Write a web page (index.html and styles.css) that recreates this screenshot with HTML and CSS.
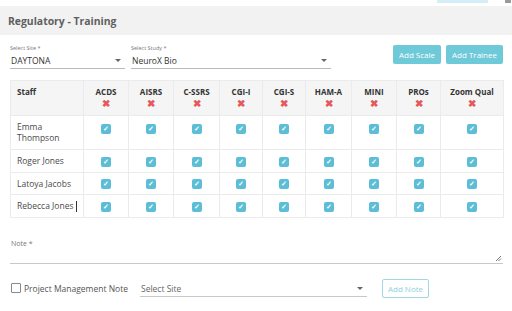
FILE: index.html
```html
<!DOCTYPE html>
<html lang="en">
<head>
    <meta charset="UTF-8">
    <title>Regulatory - Training</title>
    <link rel="stylesheet" href="styles.css">
</head>
<body>
    <div class="top-strip">
        <span class="peek-btn"></span>
        <span class="peek-gray"></span>
    </div>

    <div class="panel-head">
        <h1 class="title">Regulatory - Training</h1>
    </div>

    <div class="filters">
        <div class="field site">
            <label class="field-label">Select Site *</label>
            <div class="select-box">
                <span>DAYTONA</span>
                <span class="caret"></span>
            </div>
        </div>
        <div class="field study">
            <label class="field-label">Select Study *</label>
            <div class="select-box">
                <span>NeuroX Bio</span>
                <span class="caret"></span>
            </div>
        </div>
        <div class="actions">
            <button class="btn">Add Scale</button>
            <button class="btn">Add Trainee</button>
        </div>
    </div>

    <table class="grid">
        <colgroup>
            <col style="width: 73px">
            <col style="width: 45px">
            <col style="width: 45px">
            <col style="width: 46px">
            <col style="width: 43px">
            <col style="width: 43px">
            <col style="width: 46px">
            <col style="width: 45px">
            <col style="width: 44px">
            <col style="width: 63px">
        </colgroup>
        <thead>
            <tr>
                <th class="staff-col">Staff</th>
                <th>ACDS<span class="cross">&#x2716;</span></th>
                <th>AISRS<span class="cross">&#x2716;</span></th>
                <th>C-SSRS<span class="cross">&#x2716;</span></th>
                <th>CGI-I<span class="cross">&#x2716;</span></th>
                <th>CGI-S<span class="cross">&#x2716;</span></th>
                <th>HAM-A<span class="cross">&#x2716;</span></th>
                <th>MINI<span class="cross">&#x2716;</span></th>
                <th>PROs<span class="cross">&#x2716;</span></th>
                <th>Zoom Qual<span class="cross">&#x2716;</span></th>
            </tr>
        </thead>
        <tbody id="rows"></tbody>
    </table>

    <div class="note">
        <label class="field-label note-label">Note *</label>
        <div class="note-area">
            <svg class="grip" width="7" height="7" viewBox="0 0 7 7">
                <path d="M1 6 L6 1 M3.5 6 L6 3.5" stroke="#777" stroke-width="1"/>
            </svg>
        </div>
    </div>

    <div class="bottom">
        <label class="pm">
            <span class="box"></span>
            Project Management Note
        </label>
        <div class="select-box bottom-select">
            <span class="placeholder">Select Site</span>
            <span class="caret"></span>
        </div>
        <button class="btn-outline">Add Note</button>
    </div>

    <script>
        var staff = ['Emma Thompson', 'Roger Jones', 'Latoya Jacobs', 'Rebecca Jones'];
        var tbody = document.getElementById('rows');

        staff.forEach(function(name, i) {
            var tr = document.createElement('tr');
            var html = '<td class="name">' + name + (i === 3 ? '<span class="cursor"></span>' : '') + '</td>';
            for (var c = 0; c < 9; c++) {
                html += '<td><span class="check">&#x2713;</span></td>';
            }
            tr.innerHTML = html;
            if (i === 0) tr.className = 'tall';
            tbody.appendChild(tr);
        });
    </script>
</body>
</html>
```

FILE: styles.css
```css
body {
    margin: 0;
    width: 512px;
    height: 311px;
    overflow: hidden;
    font-family: "Open Sans", "Liberation Sans", sans-serif;
    color: #444;
    background: #fff;
}

.top-strip {
    height: 6px;
    position: relative;
}

.peek-btn {
    position: absolute;
    left: 437px;
    top: 0;
    width: 51px;
    height: 3px;
    background: #d3eef4;
}

.peek-gray {
    position: absolute;
    left: 505px;
    top: 0;
    width: 6px;
    height: 3px;
    background: #9a9a9a;
}

.panel-head {
    height: 29px;
    background: #f2f2f2;
    display: flex;
    align-items: center;
    padding-left: 8px;
}

.title {
    margin: 0;
    font-size: 10.4px;
    font-weight: 700;
    color: #5f5f5f;
}

.filters {
    display: flex;
    align-items: flex-start;
    padding: 8px 9px 0 10px;
    height: 37px;
}

.field {
    display: flex;
    flex-direction: column;
}

.field.site {
    width: 115px;
    margin-right: 6px;
}

.field.study {
    width: 200px;
}

.field-label {
    font-size: 5.5px;
    color: #777;
    height: 10px;
    line-height: 10px;
}

.select-box {
    display: flex;
    align-items: center;
    justify-content: space-between;
    font-size: 8.5px;
    color: #333;
    height: 15px;
    border-bottom: 1px solid #b9b9b9;
    padding: 0 4px 0 1px;
}

.caret {
    width: 0;
    height: 0;
    border-left: 3px solid transparent;
    border-right: 3px solid transparent;
    border-top: 3px solid #666;
}

.actions {
    margin-left: auto;
    display: flex;
    gap: 5px;
    margin-top: 2px;
}

.btn {
    height: 19px;
    border: 0;
    border-radius: 2px;
    background: #6ec9d8;
    color: #fff;
    font-family: inherit;
    font-size: 8px;
    padding: 0 6px;
}

.grid {
    margin-left: 10px;
    width: 493px;
    border-collapse: collapse;
    table-layout: fixed;
    font-size: 8.5px;
}

.grid th,
.grid td {
    border: 1px solid #ebebeb;
}

.grid th {
    height: 29px;
    background: #f5f5f5;
    vertical-align: top;
    padding: 5px 2px 0;
    font-size: 8px;
    font-weight: 700;
    color: #333;
    text-align: center;
}

.grid th.staff-col {
    text-align: left;
    padding-left: 6px;
}

.cross {
    display: block;
    color: #e5585b;
    font-size: 9.5px;
    line-height: 13px;
}

.grid td {
    text-align: center;
    vertical-align: middle;
    height: 21.5px;
    padding: 0;
}

.grid tr.tall td {
    height: 27px;
    vertical-align: top;
    padding-top: 6px;
}

.grid td.name {
    text-align: left;
    padding-left: 6px;
    color: #4a4a4a;
    line-height: 11px;
}

.grid tr.tall td.name {
    padding-top: 5px;
}

.cursor {
    display: inline-block;
    width: 1px;
    height: 11px;
    background: #333;
    margin-left: 2px;
    vertical-align: middle;
}

.check {
    display: inline-block;
    width: 10px;
    height: 10px;
    border-radius: 2px;
    background: #5bbdd6;
    color: #fff;
    font-size: 7px;
    line-height: 10px;
    font-weight: 700;
    text-align: center;
}

.note {
    margin: 21px 9px 0 10px;
}

.note-label {
    font-size: 7px;
    display: block;
    padding-left: 1px;
}

.note-area {
    height: 14px;
    border-bottom: 1.5px solid #c8c8c8;
    position: relative;
}

.grip {
    position: absolute;
    right: 1px;
    bottom: 1px;
}

.bottom {
    display: flex;
    align-items: center;
    margin: 15px 0 0 11px;
}

.pm {
    display: flex;
    align-items: center;
    font-size: 8.5px;
    color: #555;
    width: 129px;
}

.box {
    width: 8px;
    height: 8px;
    border: 1px solid #888;
    border-radius: 1px;
    margin-right: 3px;
}

.bottom-select {
    width: 222px;
    color: #666;
    font-size: 8.5px;
    border-bottom: 1.5px solid #c8c8c8;
    margin-top: 2px;
}

.btn-outline {
    margin-left: 15px;
    height: 19px;
    width: 47px;
    background: #fff;
    border: 1px solid #9fd9e3;
    border-radius: 2px;
    color: #8dcfdc;
    font-family: inherit;
    font-size: 8px;
    padding: 0;
}
```
